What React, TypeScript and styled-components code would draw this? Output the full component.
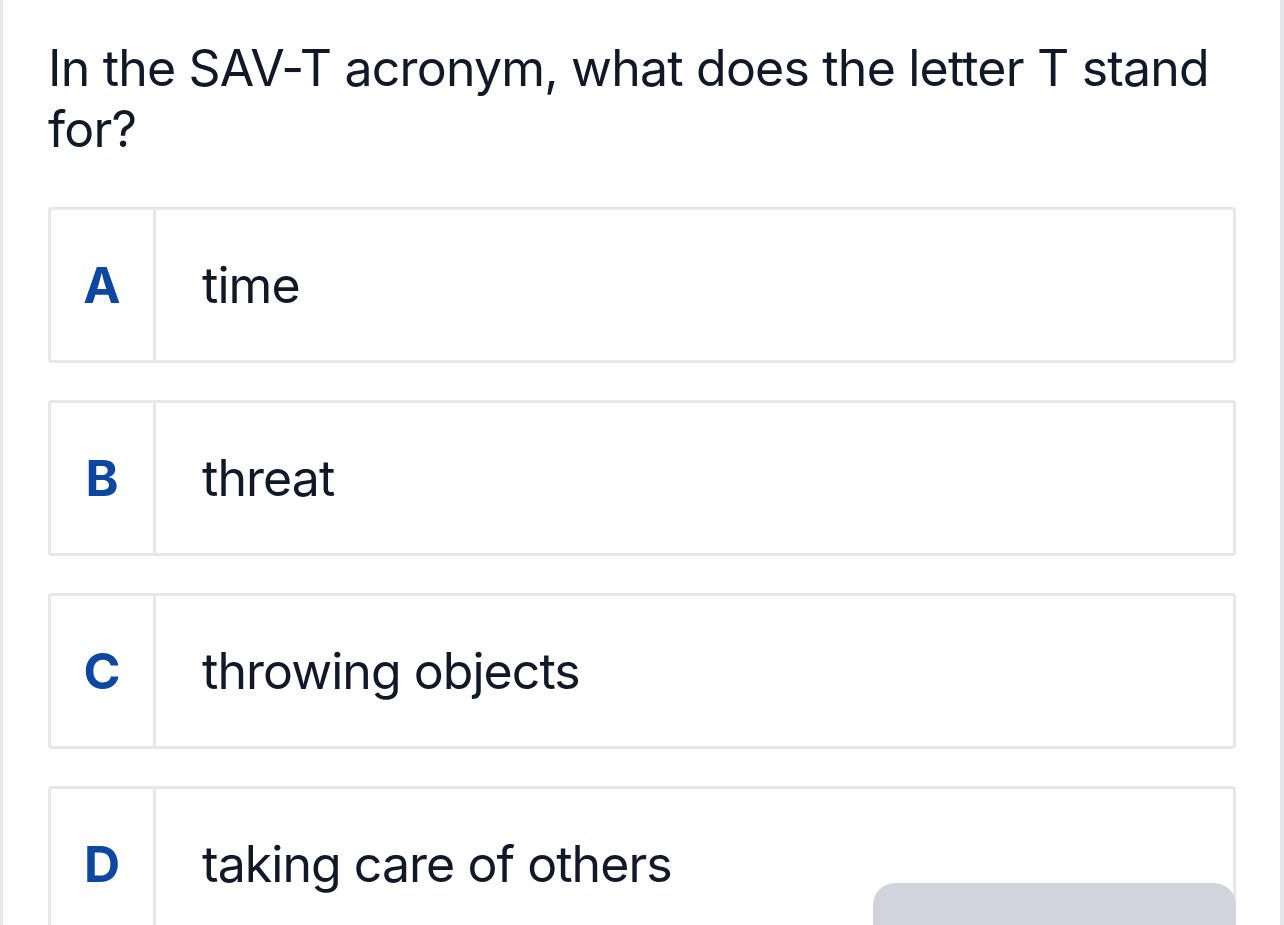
import React from 'react';
import styled, { createGlobalStyle } from 'styled-components';

const GlobalStyle = createGlobalStyle`
	html, body {
		margin: 0;
		padding: 0;
		background: #ffffff;
	}
	body {
		font-family: Inter, "Noto Sans", "Liberation Sans", sans-serif;
		color: #111827;
	}
`;

type Choice = {
	letter: string;
	text: string;
};

const choices: Choice[] = [
	{ letter: 'A', text: 'time' },
	{ letter: 'B', text: 'threat' },
	{ letter: 'C', text: 'throwing objects' },
	{ letter: 'D', text: 'taking care of others' },
];

const App: React.FC = () => {
	return (
		<>
			<GlobalStyle />
			<Page>
				<Question>In the SAV-T acronym, what does the letter T stand for?</Question>
				<ChoiceList>
					{choices.map((c) => (
						<ChoiceRow key={c.letter}>
							<Letter>{c.letter}</Letter>
							<ChoiceText>{c.text}</ChoiceText>
						</ChoiceRow>
					))}
				</ChoiceList>
			</Page>
			<FloatingButton aria-label="submit" />
		</>
	);
};

const Page = styled.main`
	box-sizing: border-box;
	height: 100vh;
	border-left: 3px solid #e5e7eb;
	border-right: 4px solid #e5e7eb;
	padding: 38px 44px 0 45px;
	overflow: hidden;
`;

const Question = styled.h1`
	margin: 0 0 47px;
	font-size: 50px;
	line-height: 61px;
	font-weight: 400;
	letter-spacing: -0.8px;
	color: #111827;
`;

const ChoiceList = styled.div`
	display: flex;
	flex-direction: column;
	gap: 37px;
`;

const ChoiceRow = styled.div`
	box-sizing: border-box;
	display: flex;
	align-items: stretch;
	flex-shrink: 0;
	height: 156px;
	border: 3px solid #e5e7eb;
	border-radius: 4px;
	background: #ffffff;
`;

const Letter = styled.div`
	display: flex;
	align-items: center;
	justify-content: center;
	width: 102px;
	flex-shrink: 0;
	border-right: 3px solid #e5e7eb;
	font-size: 50px;
	font-weight: 700;
	color: #0d47a1;
`;

const ChoiceText = styled.div`
	display: flex;
	align-items: center;
	padding-left: 46px;
	font-size: 50px;
	font-weight: 400;
	letter-spacing: -0.95px;
	color: #111827;
`;

const FloatingButton = styled.div`
	position: fixed;
	right: 48px;
	bottom: 0;
	width: 363px;
	height: 42px;
	border-radius: 22px 22px 0 0;
	background: #d1d5db;
`;

export default App;
